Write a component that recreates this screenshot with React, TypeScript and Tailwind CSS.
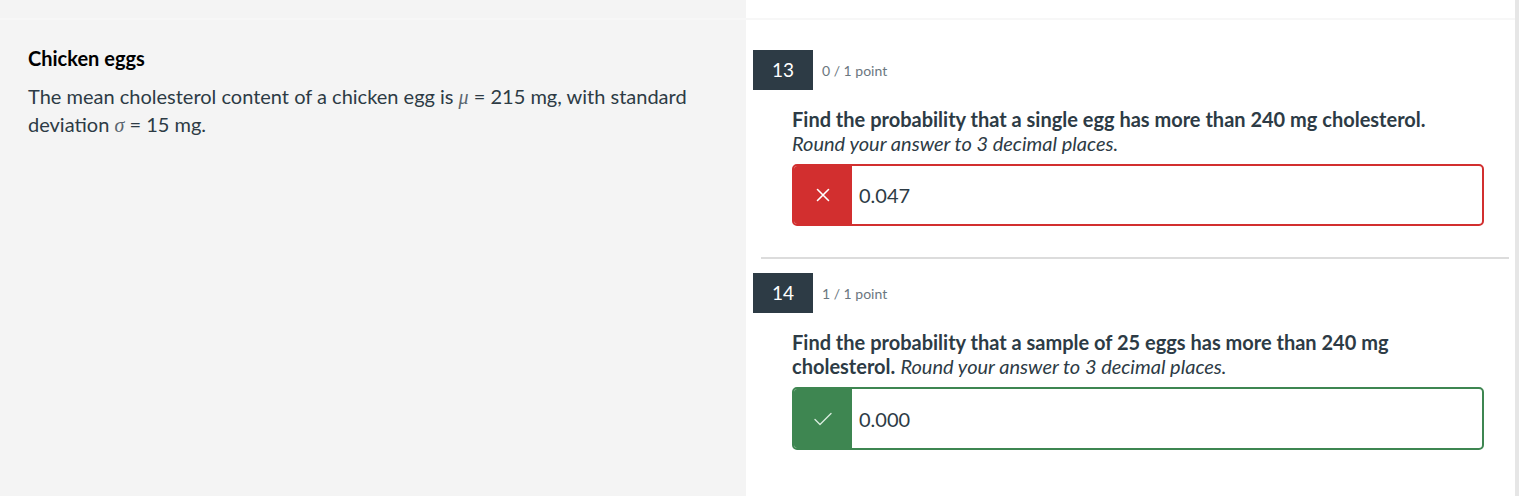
import React from 'react';

function XIcon() {
  return (
    <svg width="14" height="14" viewBox="0 0 14 14" fill="none" stroke="white" strokeWidth="1.6" strokeLinecap="round">
      <path d="M1.5 1.5l11 11M12.5 1.5l-11 11" />
    </svg>
  );
}

function CheckIcon() {
  return (
    <svg width="18" height="14" viewBox="0 0 18 14" fill="none" stroke="#d8ecdd" strokeWidth="1.4" strokeLinecap="round" strokeLinejoin="round">
      <path d="M1 7.5l5 5L17 1.5" />
    </svg>
  );
}

type QuestionProps = {
  num: number;
  points: string;
  correct: boolean;
  answer: string;
  children: React.ReactNode;
};

function Question({ num, points, correct, answer, children }: QuestionProps) {
  return (
    <div className="flex flex-col">
      <div className="flex items-center">
        <div className="flex h-[40px] w-[60px] items-center justify-center bg-[#2d3b45] text-[19px] text-white">
          {num}
        </div>
        <span className="ml-[9px] text-[14px] text-[#6b7780]">{points}</span>
      </div>
      <div className="ml-[39px] mr-[31px]">
        <p className="mt-[17px] text-[20px] leading-[24px] text-[#2d3b45]">{children}</p>
        <div
          className={
            correct
              ? 'mt-[9px] flex h-[63px] overflow-hidden rounded-[5px] border-2 border-[#3e8651] bg-white'
              : 'mt-[9px] flex h-[62px] overflow-hidden rounded-[5px] border-2 border-[#d22f2f] bg-white'
          }
        >
          <div
            className={
              correct
                ? 'flex w-[58px] items-center justify-center bg-[#3e8651]'
                : 'flex w-[58px] items-center justify-center bg-[#d22f2f]'
            }
          >
            {correct ? <CheckIcon /> : <XIcon />}
          </div>
          <div className="flex items-center pl-[7px] text-[20px] text-[#2d3b45]">{answer}</div>
        </div>
      </div>
    </div>
  );
}

export default function App() {
  return (
    <div className="flex h-[496px] w-[1519px] overflow-hidden bg-white font-['Lato','Noto_Sans',sans-serif]">
      <div className="flex flex-1 flex-col">
        {/* previous section tail */}
        <div className="flex h-[18px]">
          <div className="w-[746px] bg-[#f4f4f4]" />
          <div className="flex-1 bg-white" />
        </div>
        <div className="h-[2px] bg-[#f7f7f7]" />

        <div className="flex flex-1">
          {/* Stem */}
          <div className="w-[746px] bg-[#f4f4f4] pl-[28px] pt-[26px]">
            <h2 className="text-[20px] font-bold leading-[24px] text-black">Chicken eggs</h2>
            <p className="mt-[12px] max-w-[690px] text-[20px] leading-[28px] text-[#2d3b45]">
              The mean cholesterol content of a chicken egg is{' '}
              <span className="font-['Liberation_Serif',serif] italic leading-none text-[#5b6670]">μ</span> = 215 mg, with standard deviation{' '}
              <span className="font-['Liberation_Serif',serif] italic leading-none text-[#5b6670]">σ</span> = 15 mg.
            </p>
          </div>

          {/* Questions */}
          <div className="flex flex-1 flex-col pl-[7px] pt-[30px]">
            <Question num={13} points="0 / 1 point" correct={false} answer="0.047">
              <span className="font-bold">Find the probability that a single egg has more than 240 mg cholesterol.</span>
              <br />
              <span className="italic">Round your answer to 3 decimal places.</span>
            </Question>

            <div className="ml-[8px] mr-[6px] mt-[31px] h-[2px] bg-[#dcdcdc]" />

            <div className="mt-[14px]">
              <Question num={14} points="1 / 1 point" correct={true} answer="0.000">
                <span className="font-bold">Find the probability that a sample of 25 eggs has more than 240 mg cholesterol.</span>{' '}
                <span className="italic">Round your answer to 3 decimal places.</span>
              </Question>
            </div>
          </div>
        </div>
      </div>
      <div className="w-[4px] bg-[#e6e6e6]" />
    </div>
  );
}
